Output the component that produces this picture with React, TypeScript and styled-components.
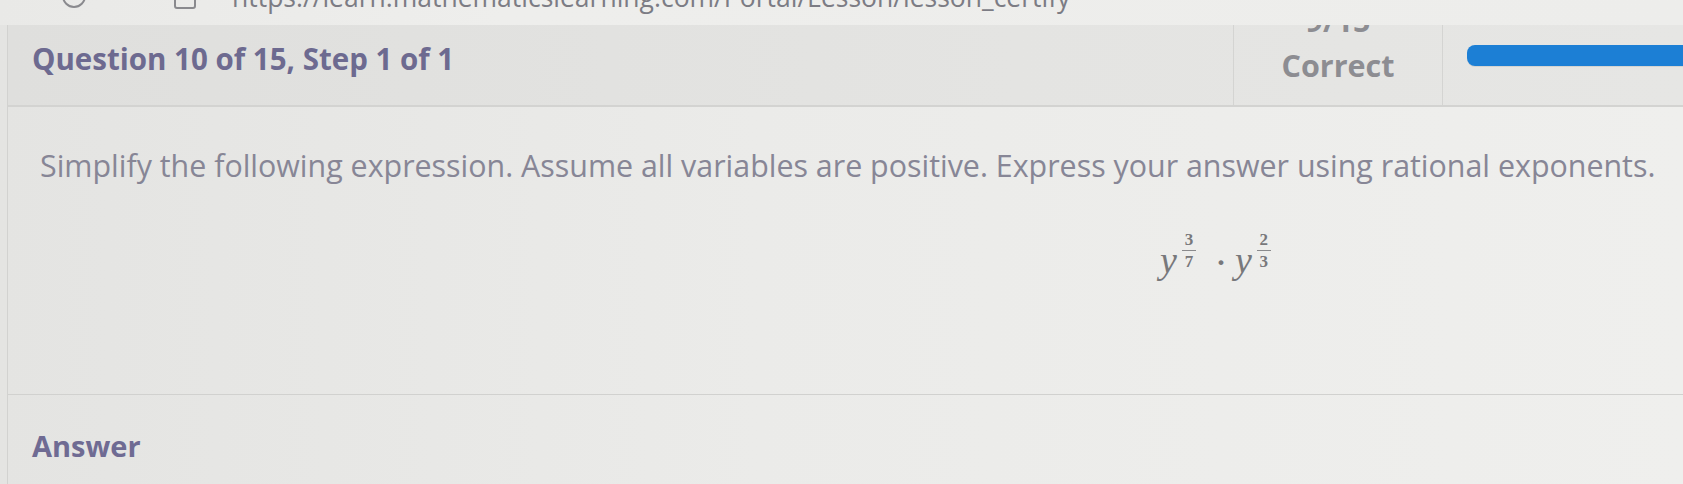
import React from "react";
import styled, { createGlobalStyle } from "styled-components";

const GlobalStyle = createGlobalStyle`
  html, body {
    margin: 0;
    padding: 0;
    background: #e8e8e6;
  }
  body {
    font-family: "Open Sans", "Noto Sans", Arial, sans-serif;
  }
`;

const Page = styled.div`
  width: 1683px;
  height: 484px;
  overflow: hidden;
  display: flex;
  flex-direction: column;
  background: linear-gradient(90deg, #e4e4e2 0%, #ebebe9 45%, #efefed 100%);
`;

const TopStrip = styled.div`
  height: 25px;
  flex: none;
  display: flex;
  align-items: flex-start;
  padding-left: 62px;
  overflow: hidden;
  background: linear-gradient(100deg, #e9e9e7 0%, #eeeeec 30%, #ededeb 100%);
`;

const ReloadRing = styled.span`
  width: 20px;
  height: 20px;
  flex: none;
  margin-top: -16px;
  border: 2px solid #8a8a8e;
  border-radius: 50%;
`;

const TabSquare = styled.span`
  width: 18px;
  height: 16px;
  flex: none;
  margin-top: -11px;
  margin-left: 88px;
  border: 2px solid #8a8a8e;
  border-radius: 3px;
`;

const UrlText = styled.span`
  margin-top: -18px;
  margin-left: 36px;
  font-size: 26.5px;
  line-height: 30px;
  color: #7c7c84;
  white-space: nowrap;
`;

const Panel = styled.div`
  flex: 1;
  display: flex;
  flex-direction: column;
  margin-left: 7px;
  border-left: 1px solid #d2d2d0;
`;

const Header = styled.div`
  height: 80px;
  flex: none;
  display: flex;
  background: linear-gradient(90deg, #dfdfdd 0%, #e4e4e2 60%, #e6e6e4 100%);
  border-bottom: 2px solid #d3d3d1;
`;

const TitleCell = styled.div`
  flex: 1;
  padding: 16px 0 0 24px;
`;

const Title = styled.h1`
  margin: 0;
  font-size: 29.5px;
  line-height: 36px;
  font-weight: 700;
  color: #6d6a90;
  white-space: nowrap;
`;

const ScoreCell = styled.div`
  width: 208px;
  flex: none;
  display: flex;
  flex-direction: column;
  align-items: center;
  overflow: hidden;
  border-left: 1px solid #d4d4d2;
  border-right: 1px solid #d4d4d2;
`;

const ScoreLine = styled.span<{ $offset: number }>`
  margin-top: ${(p) => p.$offset}px;
  font-size: 30.5px;
  line-height: 36px;
  font-weight: 700;
  color: #8d8d92;
  white-space: nowrap;
`;

const ProgressCell = styled.div`
  width: 216px;
  flex: none;
  padding: 20px 0 0 24px;
`;

const ProgressBar = styled.div`
  height: 21px;
  margin-right: -20px;
  border-radius: 8px;
  background: #1c7fd5;
  box-shadow: 0 1px 0 rgba(0, 0, 0, 0.08);
`;

const Body = styled.div`
  height: 288px;
  flex: none;
  padding: 39px 0 0 32px;
  box-sizing: border-box;
  border-bottom: 1px solid #d1d1cf;
`;

const Prompt = styled.p`
  margin: 0;
  font-size: 30.4px;
  line-height: 40px;
  color: #878696;
  white-space: nowrap;
`;

const Expression = styled.div`
  display: flex;
  align-items: flex-start;
  margin-top: 44px;
  padding-left: 1120px;
  color: #78787b;
  font-family: "Liberation Serif", "Times New Roman", serif;
`;

const Term = styled.span`
  display: inline-flex;
  align-items: flex-start;
`;

const Base = styled.span`
  font-size: 38px;
  line-height: 40px;
  font-style: italic;
  margin-top: 10px;
`;

const Exponent = styled.span`
  display: inline-flex;
  flex-direction: column;
  align-items: center;
  margin: 3px 0 0 5px;
  font-size: 17px;
  line-height: 14px;
  font-weight: 700;
`;

const FractionBar = styled.span`
  width: 14px;
  height: 1px;
  margin: 3px 0 4px;
  background: #8a8a8c;
`;

const Dot = styled.span`
  font-size: 30px;
  line-height: 40px;
  font-weight: 700;
  margin: 12px 9px 0 20px;
`;

const AnswerSection = styled.div`
  padding: 33px 0 0 24px;
`;

const AnswerLabel = styled.h2`
  margin: 0;
  font-size: 29px;
  line-height: 36px;
  font-weight: 700;
  color: #6f6b93;
`;

const Power: React.FC<{ num: number; den: number }> = ({ num, den }) => (
  <Term>
    <Base>y</Base>
    <Exponent>
      <span>{num}</span>
      <FractionBar />
      <span>{den}</span>
    </Exponent>
  </Term>
);

export default function App() {
  return (
    <Page>
      <GlobalStyle />
      <TopStrip>
        <ReloadRing />
        <TabSquare />
        <UrlText>https://learn.mathematicslearning.com/Portal/Lesson/lesson_certify</UrlText>
      </TopStrip>
      <Panel>
        <Header>
          <TitleCell>
            <Title>Question 10 of 15, Step 1 of 1</Title>
          </TitleCell>
          <ScoreCell>
            <ScoreLine $offset={-23}>9/15</ScoreLine>
            <ScoreLine $offset={9}>Correct</ScoreLine>
          </ScoreCell>
          <ProgressCell>
            <ProgressBar />
          </ProgressCell>
        </Header>
        <Body>
          <Prompt>
            Simplify the following expression. Assume all variables are positive. Express your
            answer using rational exponents.
          </Prompt>
          <Expression>
            <Power num={3} den={7} />
            <Dot>·</Dot>
            <Power num={2} den={3} />
          </Expression>
        </Body>
        <AnswerSection>
          <AnswerLabel>Answer</AnswerLabel>
        </AnswerSection>
      </Panel>
    </Page>
  );
}
